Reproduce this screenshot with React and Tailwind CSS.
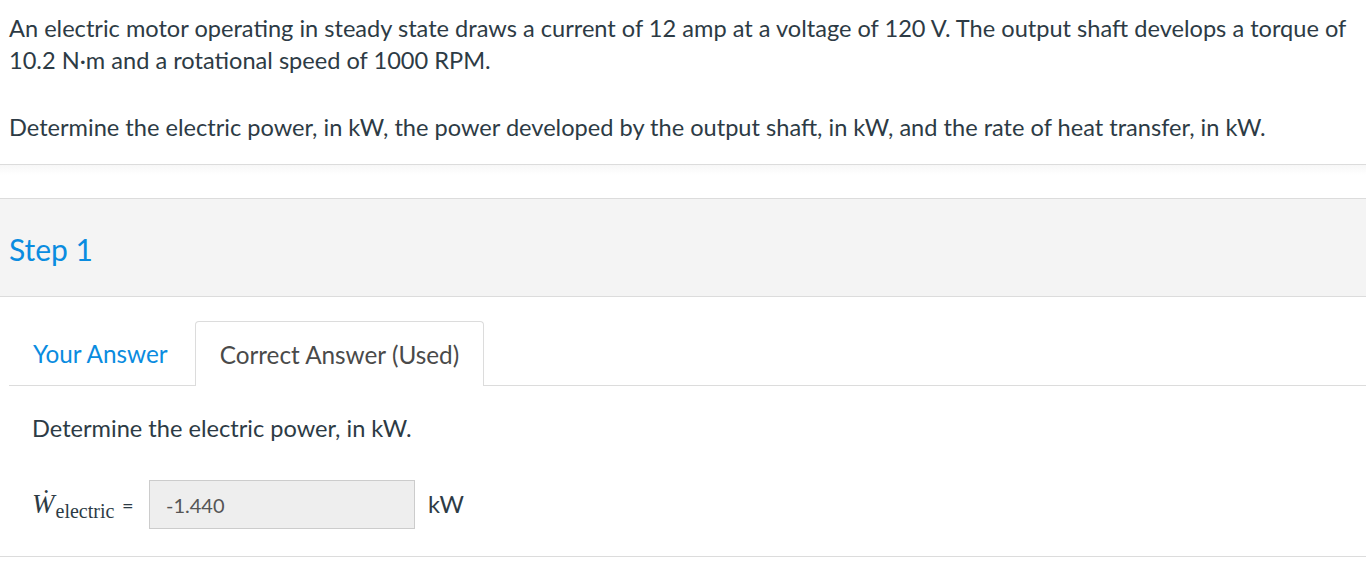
import React from "react";

export default function App() {
  return (
    <div className="min-h-[570px] bg-white text-[#2d3b45] font-['Lato','Liberation_Sans',sans-serif]">
      <div className="px-[9px] pt-[12px] pb-[21px] text-[23.6px] leading-[32px]">
        <p>
          An electric motor operating in steady state draws a current of 12 amp at a voltage of 120 V. The output shaft develops a torque of 10.2 N·m and a rotational speed of 1000 RPM.
        </p>
        <p className="mt-[35px]">
          Determine the electric power, in kW, the power developed by the output shaft, in kW, and the rate of heat transfer, in kW.
        </p>
      </div>
      <div className="h-[34px] border-t border-[#dcdcdc] bg-gradient-to-b from-[#f7f7f7] to-white to-[30%]"></div>
      <div className="h-[99px] border-y border-[#dcdcdc] bg-[#f4f4f4] flex items-center px-[9px]">
        <h2 className="text-[30px] text-[#0a8ce0] leading-none mt-[3px]">Step 1</h2>
      </div>
      <div className="pl-[9px] pt-[24px]">
        <div className="flex items-end border-b border-[#dcdcdc] h-[65px]">
          <div className="h-full flex items-center pt-[3px] pl-[24px] pr-[27px] text-[24.3px] text-[#0a8ce0]">Your Answer</div>
          <div className="h-[65px] -mb-px flex items-center pt-[3px] px-[24px] text-[24.3px] text-[#4a4a4a] bg-white border border-b-0 border-[#dcdcdc] rounded-t-[4px]">
            Correct Answer (Used)
          </div>
        </div>
        <div className="pl-[23px] pt-[26px]">
          <p className="text-[23.6px] leading-[32px]">Determine the electric power, in kW.</p>
          <div className="flex items-center mt-[36px] h-[49px]">
            <span className="flex items-baseline font-['Liberation_Serif',serif] w-[90px] text-[#2d3b45]">
              <span className="italic text-[27px] leading-none">Ẇ</span>
              <span className="text-[20px] leading-none ml-[1px] translate-y-[5px]">electric</span>
            </span>
            <span className="text-[20px] text-[#2d3b45] w-[27px]">=</span>
            <div className="w-[266px] h-[49px] bg-[#eeeeee] border border-[#cccccc] flex items-center px-[16px] text-[20px] text-[#555555]">
              -1.440
            </div>
            <span className="ml-[13px] text-[23.6px]">kW</span>
          </div>
        </div>
      </div>
      <div className="mt-[27px] border-t border-[#dcdcdc]"></div>
    </div>
  );
}
